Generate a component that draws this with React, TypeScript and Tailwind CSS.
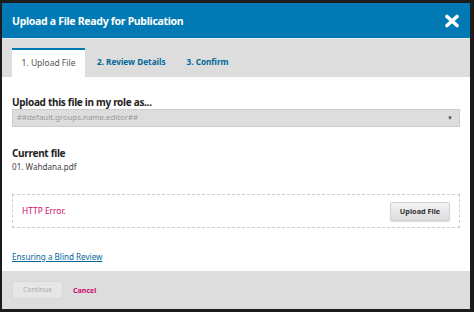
import React from 'react';

const App: React.FC = () => {
  return (
    <div className="w-[474px] h-[312px] bg-[#1c1c1c] pt-[3px] pl-[2px] pr-[4px] pb-[3px] font-['Noto_Sans',sans-serif]">
      <div className="h-full flex flex-col bg-white overflow-hidden">
        {/* Header */}
        <div className="h-[35px] bg-[#0079b4] flex items-center justify-between pl-[10px] pr-[10px] shrink-0">
          <h1 className="text-white font-bold text-[10.5px] tracking-[-0.3px] leading-[14px]">Upload a File Ready for Publication</h1>
          <svg width="16" height="14" viewBox="0 0 16 14" className="text-white">
            <path d="M3 2.5 L13 11.5 M13 2.5 L3 11.5" stroke="currentColor" strokeWidth="3.6" strokeLinecap="round" />
          </svg>
        </div>
        <div className="h-px bg-[#e8eef2] shrink-0" />

        {/* Tabs */}
        <div className="h-[38px] bg-[#dddddd] flex items-end pl-[10px] shrink-0">
          <div className="h-[29px] w-[73px] bg-white border-t-2 border-[#0079b4] flex items-center justify-center text-[8.5px] text-[#555]">
            1. Upload File
          </div>
          <div className="h-[29px] flex items-center ml-[12px] text-[8.2px] font-bold text-[#006798]">2. Review Details</div>
          <div className="h-[29px] flex items-center ml-[21px] text-[8.2px] font-bold text-[#006798]">3. Confirm</div>
        </div>

        {/* Body */}
        <div className="flex-1 px-[10px] pt-[18px]">
          <div className="text-[10px] tracking-[-0.3px] font-bold text-[#222] leading-[14px]">Upload this file in my role as...</div>
          <div className="h-[18px] bg-[#dddddd] border border-[#cccccc] flex items-center justify-between pl-[4px] pr-[6px]">
            <span className="text-[7.8px] text-[#999]">##default.groups.name.editor##</span>
            <span className="text-[6px] text-[#555]">▼</span>
          </div>

          <div className="mt-[19px] text-[10px] tracking-[-0.3px] font-bold text-[#222] leading-[14px]">Current file</div>
          <div className="mt-[1px] text-[8.1px] text-[#444] leading-[12px]">01. Wahdana.pdf</div>

          <div className="mt-[21px] h-[34px] border border-dashed border-[#cccccc] flex items-center justify-between pl-[9px] pr-[9px]">
            <span className="text-[8.4px] text-[#d00a6c]">HTTP Error.</span>
            <button className="h-[19px] w-[60px] rounded-[2px] bg-gradient-to-b from-[#f4f4f4] to-[#dcdcdc] border border-[#d0d0d0] shadow-[0_1px_1px_rgba(0,0,0,0.15)] text-[7.3px] font-bold text-[#333]">
              Upload File
            </button>
          </div>

          <div className="mt-[20px] leading-[12px]">
            <a className="text-[8.1px] text-[#006798] underline">Ensuring a Blind Review</a>
          </div>
        </div>

        {/* Footer */}
        <div className="h-[38px] bg-[#dddddd] flex items-center pl-[10px] shrink-0">
          <button className="h-[18px] w-[51px] bg-[#e6e6e6] border border-[#d8d8d8] text-[6.8px] text-[#aaa]">Continue</button>
          <span className="ml-[10px] text-[7.1px] font-bold text-[#d00a6c]">Cancel</span>
        </div>
      </div>
    </div>
  );
};

export default App;
